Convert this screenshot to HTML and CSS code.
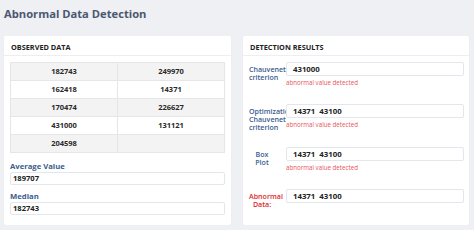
FILE: index.html
```html
<!DOCTYPE html>
<html lang="en">
<head>
    <meta charset="UTF-8">
    <meta name="viewport" content="width=device-width, initial-scale=1.0">
    <title>Abnormal Data Detection</title>
    <link rel="stylesheet" href="styles.css">
</head>
<body>
    <div class="page">
        <h1 class="page-title">Abnormal Data Detection</h1>
        <div class="cards">
            <div class="card card-observed">
                <div class="card-header">OBSERVED DATA</div>
                <div class="card-body">
                    <table class="data-table">
                        <tr><td>182743</td><td>249970</td></tr>
                        <tr><td>162418</td><td>14371</td></tr>
                        <tr><td>170474</td><td>226627</td></tr>
                        <tr><td>431000</td><td>131121</td></tr>
                        <tr><td>204598</td><td></td></tr>
                    </table>
                    <div class="stat-label">Average Value</div>
                    <div class="stat-box">189707</div>
                    <div class="stat-label">Median</div>
                    <div class="stat-box">182743</div>
                </div>
            </div>
            <div class="card card-results">
                <div class="card-header">DETECTION RESULTS</div>
                <div class="card-body">
                    <div class="result-row">
                        <div class="result-label">Chauvenet criterion</div>
                        <div class="result-field">
                            <div class="result-box">431000</div>
                            <div class="result-error">abnormal value detected</div>
                        </div>
                    </div>
                    <div class="result-row">
                        <div class="result-label">Optimization Chauvenet criterion</div>
                        <div class="result-field">
                            <div class="result-box">14371&nbsp; 43100</div>
                            <div class="result-error">abnormal value detected</div>
                        </div>
                    </div>
                    <div class="result-row">
                        <div class="result-label">Box Plot</div>
                        <div class="result-field">
                            <div class="result-box">14371&nbsp; 43100</div>
                            <div class="result-error">abnormal value detected</div>
                        </div>
                    </div>
                    <div class="result-row">
                        <div class="result-label danger">Abnormal Data:</div>
                        <div class="result-field">
                            <div class="result-box">14371&nbsp; 43100</div>
                        </div>
                    </div>
                </div>
            </div>
        </div>
    </div>
</body>
</html>
```

FILE: styles.css
```css
body {
    margin: 0;
    font-family: "Open Sans", Arial, sans-serif;
    background: #eef0f4;
    color: #222;
}

.page {
    padding: 7px 5px 0 4px;
}

.page-title {
    margin: 0 0 15px 0;
    font-size: 11.2px;
    line-height: 14px;
    font-weight: 700;
    color: #4d5770;
}

.cards {
    display: flex;
    align-items: flex-start;
    gap: 12px;
}

.card {
    background: #fff;
    border-radius: 2px;
    box-shadow: 0 1px 2px rgba(0, 0, 0, 0.04);
}

.card-observed {
    width: 227px;
}

.card-results {
    width: 226px;
}

.card-header {
    height: 17px;
    padding: 2px 0 0 7px;
    line-height: 19px;
    font-size: 7.3px;
    font-weight: 700;
    color: #222;
    border-bottom: 1px solid #eceef1;
}

.card-observed .card-body {
    padding: 6px 6px 10px 6px;
}

.data-table {
    width: 100%;
    border-collapse: collapse;
    border: 1px solid #e6e6e6;
}

.data-table td {
    width: 50%;
    height: 17px;
    padding: 0;
    border: 1px solid #e6e6e6;
    text-align: center;
    font-size: 7.5px;
    font-weight: 700;
    line-height: 17px;
    color: #2a2a2a;
}

.data-table tr:nth-child(odd) td {
    background: #f3f3f3;
}

.stat-label {
    margin-top: 8px;
    font-size: 7.7px;
    font-weight: 700;
    line-height: 11px;
    color: #3a5d8f;
}

.stat-box + .stat-label {
    margin-top: 6px;
}

.stat-box {
    height: 11px;
    padding-left: 2px;
    border: 1px solid #e3e6ea;
    border-radius: 2px;
    font-size: 7.6px;
    font-weight: 700;
    line-height: 11px;
}

.card-results .card-body {
    padding: 6px 5px 17px 0;
}

.result-row {
    display: flex;
    height: 42.4px;
}

.result-row:last-child {
    height: auto;
}

.result-label {
    width: 26px;
    flex-shrink: 0;
    padding: 3px 11px 0 6px;
    overflow: hidden;
    text-align: center;
    font-size: 7.1px;
    font-weight: 600;
    line-height: 8px;
    color: #3a5d8f;
}

.result-label.danger {
    color: #e0262b;
}

.result-field {
    flex: 1;
}

.result-box {
    height: 12px;
    padding-left: 6px;
    border: 1px solid #e3e6ea;
    border-radius: 2px;
    font-size: 7.8px;
    font-weight: 700;
    line-height: 12px;
}

.result-error {
    margin-top: 3px;
    font-size: 6.2px;
    line-height: 8px;
    color: #e8545a;
}
```
